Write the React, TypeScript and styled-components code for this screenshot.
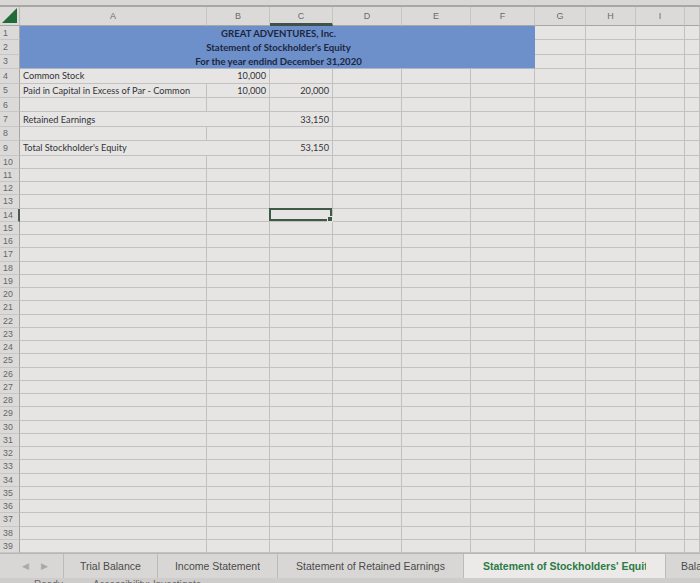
import React from 'react';
import styled, { createGlobalStyle, css } from 'styled-components';

const GlobalStyle = createGlobalStyle`
  html, body {
    margin: 0;
    padding: 0;
    background: #e7e5e3;
    overflow: hidden;
  }
  body {
    width: 700px;
    height: 583px;
  }
`;

const COLS = '20px 187px 63px 63px 69px 69px 64px 51px 50px 49px 1fr';

const Page = styled.div`
  width: 700px;
  height: 583px;
  display: flex;
  flex-direction: column;
  background: #e7e5e3;
  overflow: hidden;
  font-family: Lato, 'Liberation Sans', sans-serif;
`;

const TopStrip = styled.div`
  height: 7px;
  flex: none;
  background: #d9d7d5;
  border-bottom: 2px solid #a9a7a5;
  box-sizing: border-box;
`;

const Sheet = styled.div`
  height: 546px;
  flex: none;
  overflow: hidden;
`;

const Row = styled.div<{ $h: number }>`
  display: grid;
  grid-template-columns: ${COLS};
  height: ${(p) => p.$h}px;
`;

const Corner = styled.div`
  background: #dcdad8;
  border-right: 1px solid #bdbbb9;
  border-bottom: 1px solid #a8a6a4;
  position: relative;
  overflow: hidden;
`;

const CornerMark = styled.div`
  position: absolute;
  right: 2px;
  bottom: 2px;
  width: 0;
  height: 0;
  border-left: 15px solid transparent;
  border-bottom: 15px solid #1f6b3a;
`;

const ColHeader = styled.div<{ $active?: boolean }>`
  background: #dcdad8;
  border-right: 1px solid #c6c4c2;
  border-bottom: ${(p) => (p.$active ? '3px solid #3f5148' : '1px solid #a8a6a4')};
  color: #6b6b6b;
  font-family: 'Liberation Sans', Arial, sans-serif;
  font-size: 9px;
  display: flex;
  align-items: center;
  justify-content: center;
  box-sizing: border-box;
  padding-top: ${(p) => (p.$active ? '2px' : '0')};
`;

const RowHeader = styled.div<{ $active?: boolean }>`
  background: #dcdad8;
  border-right: ${(p) => (p.$active ? '2px solid #4a5a50' : '1px solid #a8a6a4')};
  border-bottom: 1px solid #c8c6c4;
  color: #666;
  font-family: 'Liberation Sans', Arial, sans-serif;
  font-size: 8.8px;
  display: flex;
  align-items: center;
  padding-left: 3px;
  box-sizing: border-box;
  overflow: hidden;
`;

const Cell = styled.div<{ $align?: 'left' | 'right'; $noRight?: boolean }>`
  border-right: ${(p) => (p.$noRight ? 'none' : '1px solid #c3c1bf')};
  border-bottom: 1px solid #c3c1bf;
  color: #2f3338;
  font-size: 9.2px;
  display: flex;
  align-items: center;
  justify-content: ${(p) => (p.$align === 'right' ? 'flex-end' : 'flex-start')};
  padding: 0 3px;
  box-sizing: border-box;
  white-space: nowrap;
  position: relative;
`;

const Banner = styled.div<{ $last?: boolean }>`
  grid-column: 2 / 8;
  background: #6d8fca;
  color: #1c2740;
  font-size: 9.6px;
  font-weight: 700;
  display: flex;
  align-items: center;
  justify-content: center;
  padding-left: 2px;
  white-space: nowrap;
  ${(p) =>
    p.$last &&
    css`
      border-bottom: 1px solid #aab6cc;
    `}
`;

const Selection = styled.div`
  position: absolute;
  inset: -1px 0 0 -1px;
  border: 2px solid #3d5a47;
`;

const Handle = styled.div`
  position: absolute;
  right: -3px;
  bottom: -3px;
  width: 4px;
  height: 4px;
  background: #3d5a47;
  border: 1px solid #e7e5e3;
`;

const TabBar = styled.div`
  height: 25px;
  flex: none;
  display: flex;
  align-items: stretch;
  background: #d9d7d5;
  border-top: 1px solid #b9b7b5;
  font-family: 'Liberation Sans', Arial, sans-serif;
  font-size: 10.5px;
  color: #4a4a4a;
  box-sizing: border-box;
  overflow: hidden;
`;

const Arrows = styled.div`
  flex: none;
  width: 64px;
  display: flex;
  align-items: center;
  gap: 12px;
  padding-left: 22px;
  box-sizing: border-box;
  color: #a9a9a9;
  font-size: 9px;
  border-right: 1px solid #bdbbb9;
`;

const Tab = styled.div<{ $active?: boolean; $pad: number }>`
  flex: none;
  display: flex;
  align-items: center;
  padding: 0 ${(p) => p.$pad}px;
  white-space: nowrap;
  border-right: 1px solid #bdbbb9;
  ${(p) =>
    p.$active &&
    css`
      background: #ebeae8;
      color: #2c7a45;
      font-weight: 700;
      width: 202px;
      box-sizing: border-box;
      margin-top: -1px;
    `}
`;

const TabLabel = styled.span`
  display: block;
  overflow: hidden;
  white-space: nowrap;
`;

const StatusBar = styled.div`
  flex: 1;
  background: #cfcdcb;
  font-family: 'Liberation Sans', Arial, sans-serif;
  font-size: 10px;
  color: #666;
  display: flex;
  gap: 30px;
  padding-left: 34px;
  line-height: 14px;
  overflow: hidden;
`;

const colLetters = ['A', 'B', 'C', 'D', 'E', 'F', 'G', 'H', 'I', ''];

type RowData = { a?: string; b?: string; c?: string };
const data: Record<number, RowData> = {
  4: { a: 'Common Stock', b: '10,000' },
  5: { a: 'Paid in Capital in Excess of Par - Common', b: '10,000', c: '20,000' },
  7: { a: 'Retained Earnings', c: '33,150' },
  9: { a: "Total Stockholder's Equity", c: '53,150' },
};

const bannerLines = [
  'GREAT ADVENTURES, Inc.',
  "Statement of Stockholder's Equity",
  'For the year endind December 31,2020',
];

const tabs = [
  { label: 'Trial Balance', pad: 16 },
  { label: 'Income Statement', pad: 17 },
  { label: 'Statement of Retained Earnings', pad: 18 },
  { label: "Statement of Stockholders' Equity", pad: 19, active: true },
  { label: 'Balance Sheet', pad: 15 },
];

const rowHeight = (n: number) => (n <= 9 ? 14.4 : 13.25);

const App: React.FC = () => {
  const rows = Array.from({ length: 40 }, (_, i) => i + 1);

  return (
    <>
      <GlobalStyle />
      <Page>
        <TopStrip />
        <Sheet>
          <Row $h={19}>
            <Corner>
              <CornerMark />
            </Corner>
            {colLetters.map((l, i) => (
              <ColHeader key={i} $active={l === 'C'}>
                {l}
              </ColHeader>
            ))}
          </Row>
          {rows.map((n) => {
            const d = data[n] || {};
            return (
              <Row key={n} $h={rowHeight(n)}>
                <RowHeader $active={n === 14}>{n}</RowHeader>
                {n <= 3 ? (
                  <>
                    <Banner $last={n === 3}>{bannerLines[n - 1]}</Banner>
                    {[0, 1, 2, 3].map((k) => (
                      <Cell key={k} />
                    ))}
                  </>
                ) : (
                  <>
                    <Cell $noRight={!!d.a && n !== 5}>{d.a}</Cell>
                    <Cell $align="right">{d.b}</Cell>
                    <Cell $align="right">
                      {d.c}
                      {n === 14 && (
                        <Selection>
                          <Handle />
                        </Selection>
                      )}
                    </Cell>
                    {[0, 1, 2, 3, 4, 5, 6].map((k) => (
                      <Cell key={k} />
                    ))}
                  </>
                )}
              </Row>
            );
          })}
        </Sheet>
        <TabBar>
          <Arrows>
            <span>◀</span>
            <span>▶</span>
          </Arrows>
          {tabs.map((t) => (
            <Tab key={t.label} $pad={t.pad} $active={t.active}>
              <TabLabel>{t.label}</TabLabel>
            </Tab>
          ))}
        </TabBar>
        <StatusBar>
          <span>Ready</span>
          <span>Accessibility: Investigate</span>
        </StatusBar>
      </Page>
    </>
  );
};

export default App;
